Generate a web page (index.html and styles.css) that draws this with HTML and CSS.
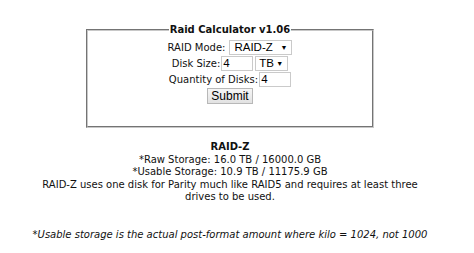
FILE: index.html
```html
<!DOCTYPE html>
<html>
<head>
<meta charset="utf-8">
<title>Raid Calculator</title>
<link rel="stylesheet" href="styles.css">
</head>
<body>
<div class="page">
  <form class="calc-form">
    <fieldset class="calc">
      <legend class="calc-title">Raid Calculator v1.06</legend>
      <div class="row">
        <label class="lbl">RAID Mode:</label>
        <span class="sel sel-mode"><span class="sel-text">RAID-Z</span><span class="arrow">▼</span></span>
      </div>
      <div class="row">
        <label class="lbl">Disk Size:</label>
        <span class="inp inp-size">4</span>
        <span class="sel sel-unit"><span class="sel-text">TB</span><span class="arrow">▼</span></span>
      </div>
      <div class="row">
        <label class="lbl">Quantity of Disks:</label>
        <span class="inp inp-qty">4</span>
      </div>
      <div class="row row-btn">
        <button type="button" class="btn">Submit</button>
      </div>
    </fieldset>
  </form>
  <div class="result">
    <div class="mode">RAID-Z</div>
    <div>*Raw Storage: 16.0 TB / 16000.0 GB</div>
    <div>*Usable Storage: 10.9 TB / 11175.9 GB</div>
    <div class="desc">RAID-Z uses one disk for Parity much like RAID5 and requires at least three drives to be used.</div>
  </div>
  <p class="note">*Usable storage is the actual post-format amount where kilo = 1024, not 1000</p>
</div>
</body>
</html>
```
FILE: styles.css
```css
html, body {
  background: #ffffff;
}
body {
  margin: 8px;
  font-family: "DejaVu Sans", Verdana, sans-serif;
  font-size: 10px;
  color: #111;
}
.page {
  width: 444px;
  padding-top: 16px;
  text-align: center;
}
.calc-form {
  margin: 0;
}
.calc {
  width: 288px;
  box-sizing: border-box;
  margin: 0 auto;
  padding: 3px 0 22px;
  border: 2px groove #c8c8c8;
  text-align: center;
}
.calc-title {
  font-weight: bold;
  padding: 0 1px;
  margin: 0 auto;
  line-height: 12px;
}
.row {
  display: flex;
  justify-content: center;
  align-items: center;
  height: 16px;
}
.row-btn {
  height: 17px;
}
.lbl {
  margin-right: 1px;
}
.sel, .inp {
  box-sizing: border-box;
  height: 15px;
  border: 1px solid #cacaca;
  background: #fff;
  font-family: "Liberation Sans", Arial, sans-serif;
  font-size: 11.5px;
  line-height: 13px;
  text-align: left;
  position: relative;
  color: #000;
}
.sel-mode { width: 63px; padding-left: 4px; margin-left: 3px; }
.sel-unit { width: 33px; padding-left: 3px; }
.inp-size { width: 32px; padding-left: 1px; margin-right: 2px; }
.inp-qty { width: 32px; padding-left: 1px; }
.arrow {
  position: absolute;
  right: 4px;
  top: 0;
  font-size: 7px;
  line-height: 13px;
}
.btn {
  box-sizing: border-box;
  height: 16px;
  width: 46px;
  padding: 0;
  border: 1px solid #b8b8b8;
  background: linear-gradient(#f6f6f6, #e2e2e2);
  font-family: "Liberation Sans", Arial, sans-serif;
  font-size: 12px;
  line-height: 14px;
  color: #000;
}
.result {
  margin-top: 13px;
  line-height: 12.5px;
}
.mode {
  font-weight: bold;
}
.desc {
  padding: 0 20px;
}
.note {
  margin: 25px 0 0;
  font-style: italic;
}
```
